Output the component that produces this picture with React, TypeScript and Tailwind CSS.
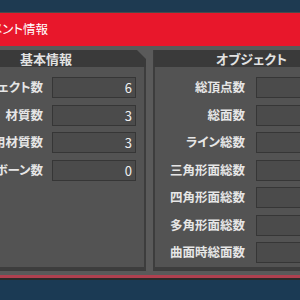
import React from "react";

const leftRows: [string, string][] = [
  ["オブジェクト数", "6"],
  ["材質数", "3"],
  ["使用材質数", "3"],
  ["ボーン数", "0"],
];

const rightRows: [string, string][] = [
  ["総頂点数", ""],
  ["総面数", ""],
  ["ライン総数", ""],
  ["三角形面総数", ""],
  ["四角形面総数", ""],
  ["多角形面総数", ""],
  ["曲面時総面数", ""],
];

function Row({ label, value, labelW, gap }: { label: string; value: string; labelW: string; gap: string }) {
  return (
    <div className="flex items-center h-[21px]">
      <div className={`${labelW} shrink-0 flex justify-end whitespace-nowrap text-[12.5px] font-bold text-[#e6e6e6] leading-none`}>
        {label}
      </div>
      <div className={`${gap} w-[84px] h-[21px] shrink-0 bg-[#4b4b4b] border border-[#363636] flex items-center justify-end pr-[3px] text-[13px] text-[#f0f0f0] leading-none`}>
        {value}
      </div>
    </div>
  );
}

export default function App() {
  return (
    <div className="w-[300px] h-[300px] overflow-hidden bg-[#1c3a53] flex flex-col font-['Noto_Sans_CJK_JP',sans-serif] [font-feature-settings:'palt']">
      <div className="h-[12px] shrink-0 bg-[#1e3a51]" />
      <div className="h-[1px] shrink-0 bg-[#4a4a4a]" />
      <div className="h-[33px] shrink-0 bg-[#e8172b] flex items-center">
        <div className="w-[48px] shrink-0 flex justify-end whitespace-nowrap text-white text-[12.5px] leading-none">
          ドキュメント情報
        </div>
      </div>
      <div className="h-[229px] shrink-0 bg-[#5a5a5a] flex ml-[-54px] gap-[7px] pt-[4px]">
        {/* left panel */}
        <div className="w-[200px] shrink-0 flex flex-col">
          <div className="h-[17px] shrink-0 bg-[#3a3a3a] [clip-path:polygon(0_0,calc(100%-9px)_0,100%_9px,100%_100%,0_100%)] flex items-center justify-center text-[13px] font-bold text-[#e2e2e2] leading-none">
            基本情報
          </div>
          <div className="h-[204px] shrink-0 bg-[#535353] border-r-2 border-b-4 border-[#3d3d3d] flex flex-col pt-[10px] gap-[6.5px]">
            {leftRows.map(([l, v]) => (
              <Row key={l} label={l} value={v} labelW="w-[97px]" gap="ml-[9px]" />
            ))}
          </div>
        </div>
        {/* right panel */}
        <div className="w-[196px] shrink-0 flex flex-col">
          <div className="h-[17px] shrink-0 bg-[#3a3a3a] border-l border-[#3d3d3d] flex items-center justify-center text-[13px] font-bold text-[#e2e2e2] leading-none">
            オブジェクト
          </div>
          <div className="h-[204px] shrink-0 bg-[#535353] border-l-2 border-b-4 border-[#3d3d3d] flex flex-col pt-[10px] gap-[6.5px]">
            {rightRows.map(([l, v]) => (
              <Row key={l} label={l} value={v} labelW="w-[90px]" gap="ml-[11px]" />
            ))}
          </div>
        </div>
      </div>
      <div className="h-[3px] shrink-0 bg-[#b0404f]" />
      <div className="h-[2px] shrink-0 bg-[#2a2a2a]" />
      <div className="flex-1 bg-[#1b3a54]" />
    </div>
  );
}
